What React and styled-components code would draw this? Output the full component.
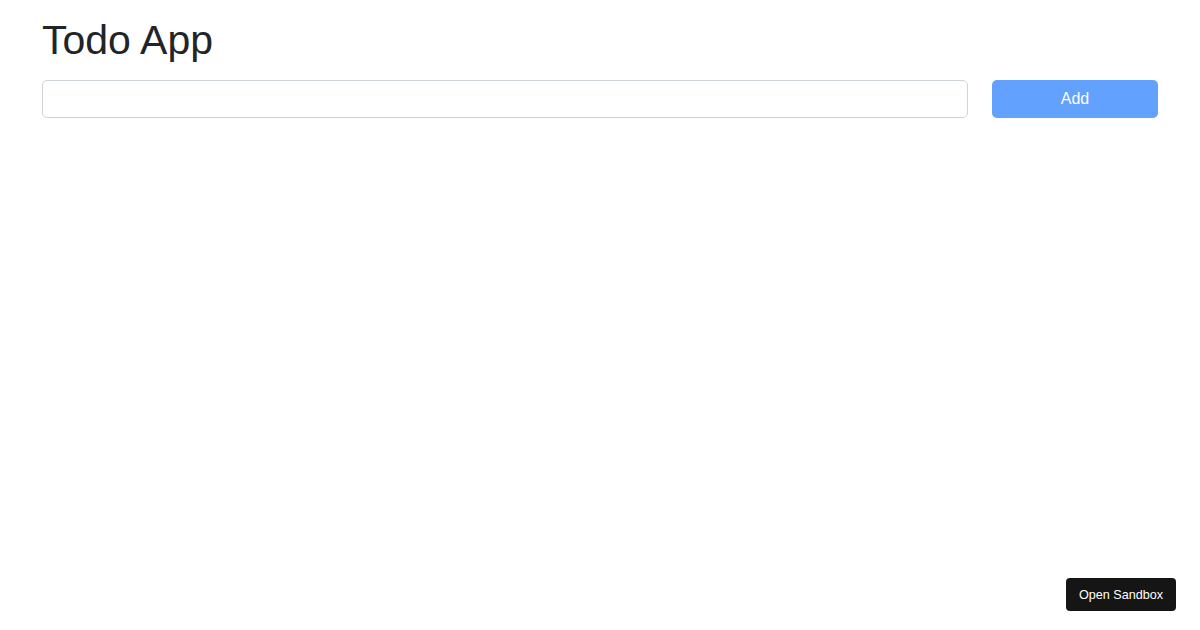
import styled, { createGlobalStyle } from 'styled-components';

const GlobalStyle = createGlobalStyle`
  body {
    margin: 0;
    background: #fff;
    color: #212529;
    font-family: "Liberation Sans", Arial, sans-serif;
  }
  * { box-sizing: border-box; }
`

const Container = styled.div`
  max-width: 1140px;
  margin: 0 auto;
  padding: 16px 12px 0;
`

const Title = styled.h1`
  margin: 0 0 15px;
  font-size: 41px;
  font-weight: 400;
  line-height: 49px;
`

const Row = styled.div`
  display: grid;
  grid-template-columns: 1fr 166px;
  column-gap: 24px;
`

const Input = styled.input`
  height: 38px;
  padding: 6px 12px;
  font-size: 16px;
  font-family: inherit;
  border: 1px solid #ced4da;
  border-radius: 5px;
  outline: none;
`

const AddButton = styled.button`
  height: 38px;
  border: none;
  border-radius: 5px;
  background: rgb(98, 161, 254);
  color: #fff;
  font-size: 16px;
  font-family: inherit;
`

const SandboxButton = styled.button`
  position: fixed;
  right: 24px;
  bottom: 19px;
  height: 33px;
  padding: 0 13px;
  border: none;
  border-radius: 4px;
  background: #151515;
  color: #fff;
  font-size: 12.6px;
  font-family: "Liberation Sans", Arial, sans-serif;
`

export default function App() {
  return <>
    <GlobalStyle />
    <Container>
      <Title>Todo App</Title>
      <Row>
        <Input type="text" />
        <AddButton disabled>Add</AddButton>
      </Row>
    </Container>
    <SandboxButton>Open Sandbox</SandboxButton>
  </>
}
